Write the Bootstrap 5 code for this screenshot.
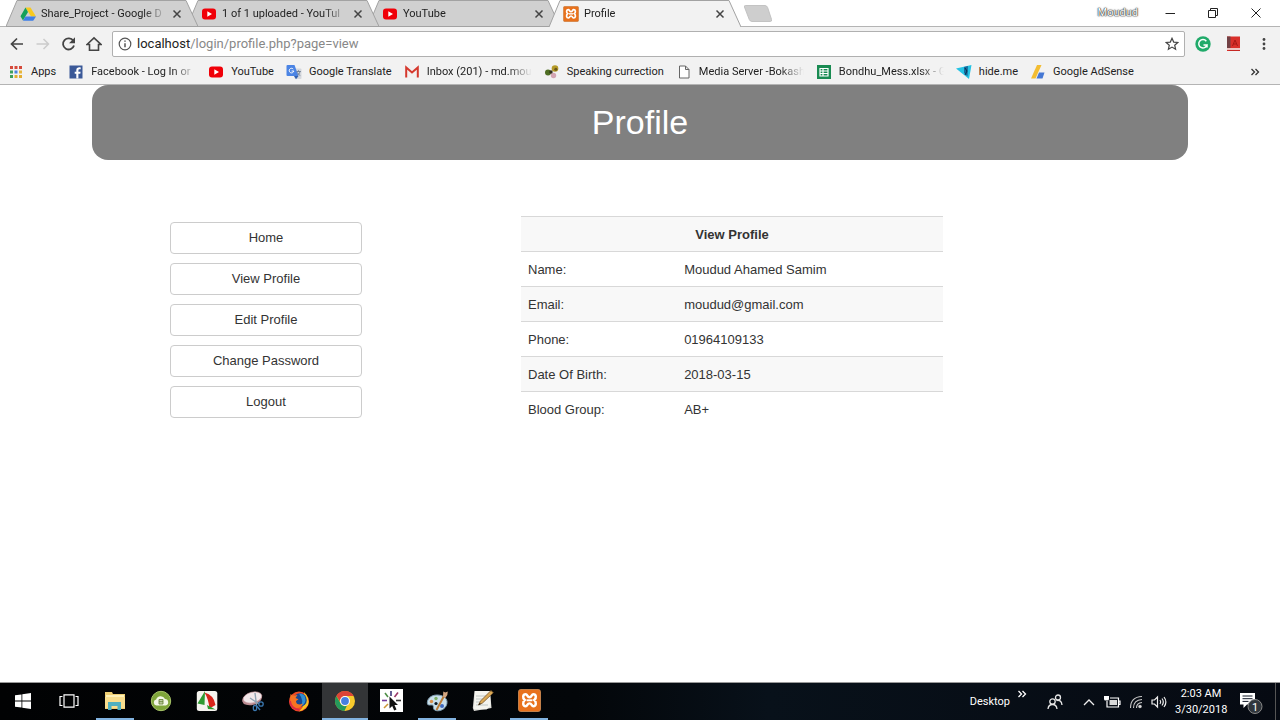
<!DOCTYPE html>
<html lang="en">
<head>
<meta charset="utf-8">
<meta name="viewport" content="width=device-width, initial-scale=1">
<title>Profile</title>
<link href="https://cdn.jsdelivr.net/npm/bootstrap@5.3.0/dist/css/bootstrap.min.css" rel="stylesheet">
<style>
body { font-family: Roboto, "Open Sans", sans-serif; font-size: 11px; line-height: 16px; color: #222; background: #fff; }
svg { display: block; flex: none; }
a { color: inherit; text-decoration: none; }
button { color: inherit; }
.plain { background: none; border: 0; padding: 0; }

/* Tab strip */
.strip { height: 27px; border-bottom: 1px solid #b4b4b4; }
.tabs { padding-left: 6px; height: 27px; min-width: 0; }
.tab-item { position: relative; flex: 0 1 192px; min-width: 0; height: 27px; margin-right: -11px; padding: 1px 14px 0 14px; gap: 5px; }
.tab-item:nth-child(1) { z-index: 3; }
.tab-item:nth-child(2) { z-index: 2; }
.tab-item:nth-child(3) { z-index: 1; }
.tab-item.current { z-index: 4; }
.tab-shape { position: absolute; inset: 0; width: 100%; height: 100%; z-index: -1; }
.fade-text { white-space: nowrap; -webkit-mask-image: linear-gradient(to right, #000 calc(100% - 24px), transparent); mask-image: linear-gradient(to right, #000 calc(100% - 24px), transparent); }
.tab-title { width: 126px; }
.new-tab { margin: 0 0 0 14px; }
.user-name { color: #fff; text-shadow: 0 0 1px #222, 0 0 1px #222, 0 0 2px #555; }
.win-btns { gap: 31px; padding: 0 18px 0 26px; }

/* Toolbar */
.browser-bars { background: #f2f2f2; border-bottom: 1px solid #b4b4b4; height: 58px; }
.toolbar { padding: 4px 9px 0 9px; gap: 10px; }
.address { height: 26px; background: #fff; border: 1px solid #b0b0b0; border-radius: 2px; padding: 0 5px; gap: 5px; position: relative; }
.address input { border: 0; outline: 0; padding: 0; background: none; font-size: 13px; line-height: 20px; color: transparent; caret-color: #222; width: 100%; height: 22px; }
.address .url { position: absolute; left: 24px; top: 2px; font-size: 13px; line-height: 20px; color: #888; pointer-events: none; }
.address .url b { font-weight: 400; color: #222; }
.bookmarks { height: 27px; padding: 2px 20px 0 8px; gap: 12px; }
.bookmarks a { gap: 7px; white-space: nowrap; }
.bookmarks .fade-text { width: 105px; }

/* Profile page */
.site { font-family: "Liberation Sans", Arial, sans-serif; font-size: 13px; line-height: 19px; color: #333; }
.site-width { max-width: 1096px; margin: 0 auto; }
.banner { background: #808080; border-radius: 16px; color: #fff; height: 75px; font-size: 34px; line-height: 75px; font-weight: 400; }
.profile-grid { display: grid; grid-template-columns: 192fr 422fr; column-gap: 159px; padding: 56px 245px 0 78px; }
.side-menu { gap: 9px; padding-top: 6px; }
.side-menu .btn { font-size: 13px; line-height: 20px; padding: 5px 8px; border: 1px solid #ccc; border-radius: 4px; color: #333; background: #fff; }
.profile-table { table-layout: fixed; --bs-table-color: #333; --bs-table-striped-color: #333; --bs-table-striped-bg: #f8f8f8; }
.profile-table th, .profile-table td { border-top: 1px solid #d8d8d8; border-bottom: 0; padding: 8px 7px 7px; }
.profile-table col:first-child { width: 37%; }

/* Taskbar */
.taskbar { height: 38px; border-top: 1px solid #999; background: linear-gradient(to right, #010203, #030609 45%, #08111a 60%, #060a12); color: #fff; }
.task { width: 46px; height: 37px; display: flex; align-items: center; justify-content: center; padding-bottom: 2px; }
.task.open { background: linear-gradient(#82b3e0, #82b3e0) center bottom / 38px 2px no-repeat; }
.task.focused { background: linear-gradient(#82b3e0, #82b3e0) center bottom / 46px 2px no-repeat #333537; }
.tray { padding-right: 4px; gap: 20px; }
.toolbar-label { gap: 7px; }
.status-icons { gap: 8px; }
.clock-area { gap: 12px; margin-left: -14px; }
.clock { line-height: 16px; width: 52px; }
.show-desktop { width: 1px; height: 37px; background: #555; }
</style>
</head>
<body class="d-flex flex-column min-vh-100">

<svg width="0" height="0" class="position-absolute" aria-hidden="true">
  <symbol id="i-yt" viewBox="0 0 16 16"><rect x="1" y="2.500" width="14" height="11" rx="3" fill="#f00008"/><path d="M6.300 5.300v5.400L11 8z" fill="#fff"/></symbol>
  <symbol id="i-close" viewBox="0 0 10 10"><path d="M1.500 1.500l7 7M8.500 1.500l-7 7" stroke="#444" stroke-width="1.500"/></symbol>
  <symbol id="i-xampp" viewBox="0 0 24 24"><rect x=".5" y=".5" width="23" height="23" rx="2.500" fill="#e8711c" stroke="#c8854e"/><path d="M8 5.500c-3 0-3.500 4-1 6-2.500 2-2 6.500 1 6.500 2 0 1.500-3 4-3s2 3 4 3c3 0 3.500-4.500 1-6.500 2.500-2 2-6-1-6-2 0-1.500 3-4 3s-2-3-4-3z" fill="none" stroke="#fff" stroke-width="2.600"/><path d="M9 11.800h6" stroke="#fff" stroke-width="2"/></symbol>
</svg>

<header>
  <div class="strip d-flex align-items-start">
    <nav class="tabs d-flex flex-grow-1" aria-label="Tabs">
      <div class="tab-item d-flex align-items-center">
        <svg class="tab-shape" viewBox="0 0 192 27" preserveAspectRatio="none"><path d="M0 26.500L11 .5H180L192 26.500z" fill="#d0d0d0" stroke="#a2a2a2"/></svg>
        <svg width="16" height="16" viewBox="0 0 16 16"><path d="M5.500 1.500h5L16 10.500h-5z" fill="#f7c91f"/><path d="M5.500 1.500L8 6 3 14.500.5 10.300z" fill="#15a05b"/><path d="M5.500 10.500H16L13.200 14.800H3z" fill="#3f7fe8"/></svg>
        <a href="#" class="fade-text tab-title">Share_Project - Google D</a>
        <button class="plain" aria-label="Close tab"><svg width="10" height="10"><use href="#i-close"/></svg></button>
      </div>
      <div class="tab-item d-flex align-items-center">
        <svg class="tab-shape" viewBox="0 0 192 27" preserveAspectRatio="none"><path d="M0 26.500L11 .5H180L192 26.500z" fill="#d0d0d0" stroke="#a2a2a2"/></svg>
        <svg width="16" height="16"><use href="#i-yt"/></svg>
        <a href="#" class="fade-text tab-title">1 of 1 uploaded - YouTul</a>
        <button class="plain" aria-label="Close tab"><svg width="10" height="10"><use href="#i-close"/></svg></button>
      </div>
      <div class="tab-item d-flex align-items-center">
        <svg class="tab-shape" viewBox="0 0 192 27" preserveAspectRatio="none"><path d="M0 26.500L11 .5H180L192 26.500z" fill="#d0d0d0" stroke="#a2a2a2"/></svg>
        <svg width="16" height="16"><use href="#i-yt"/></svg>
        <a href="#" class="fade-text tab-title">YouTube</a>
        <button class="plain" aria-label="Close tab"><svg width="10" height="10"><use href="#i-close"/></svg></button>
      </div>
      <div class="tab-item current d-flex align-items-center">
        <svg class="tab-shape" viewBox="0 0 192 27" preserveAspectRatio="none"><path d="M0 27L11 .5H180L192 27z" fill="#f2f2f2"/><path d="M0 27L11 .5H180L192 27" fill="none" stroke="#a2a2a2"/></svg>
        <svg width="16" height="16"><use href="#i-xampp"/></svg>
        <a href="#" class="fade-text tab-title">Profile</a>
        <button class="plain" aria-label="Close tab"><svg width="10" height="10"><use href="#i-close"/></svg></button>
      </div>
      <button class="plain new-tab" aria-label="New tab"><svg width="28" height="17" viewBox="0 0 32 17" preserveAspectRatio="none"><path d="M1.500.5H24q2 0 3 2l4.500 12q.5 2-1.500 2H9q-2 0-3-2L.5 2Q0 .5 1.500.5z" fill="#cecece" stroke="#c0c0c0"/></svg></button>
    </nav>
    <span class="user-name align-self-center">Moudud</span>
    <div class="win-btns d-flex align-items-center h-100">
      <button class="plain" aria-label="Minimize"><svg width="12" height="12" viewBox="0 0 12 12"><path d="M1.500 6.500h9.500" stroke="#222"/></svg></button>
      <button class="plain" aria-label="Restore"><svg width="12" height="12" viewBox="0 0 12 12" fill="none" stroke="#222"><path d="M1.500 3.500h7v7h-7zM3.500 3.500v-2h7v7h-2"/></svg></button>
      <button class="plain" aria-label="Close"><svg width="12" height="12" viewBox="0 0 12 12"><path d="M1.500 1.500l9 9M10.500 1.500l-9 9" stroke="#222"/></svg></button>
    </div>
  </div>

  <div class="browser-bars">
    <div class="toolbar d-flex align-items-center">
      <button class="plain" aria-label="Back"><svg width="16" height="16" viewBox="0 0 16 16" fill="none" stroke="#444" stroke-width="1.700"><path d="M14 8H2.500M8 2.500L2.500 8 8 13.500"/></svg></button>
      <button class="plain" aria-label="Forward" disabled><svg width="16" height="16" viewBox="0 0 16 16" fill="none" stroke="#ccc" stroke-width="1.500"><path d="M1.500 8H13M8.500 3l5 5-5 5"/></svg></button>
      <button class="plain" aria-label="Reload"><svg width="15" height="16" viewBox="0 0 15 16"><path d="M12.300 4.800A5.600 5.600 0 1 0 13 9.500" fill="none" stroke="#444" stroke-width="1.800"/><path d="M14 1.200v6H8z" fill="#444"/></svg></button>
      <button class="plain" aria-label="Home"><svg width="16" height="16" viewBox="0 0 16 16" fill="none" stroke="#444" stroke-width="1.600"><path d="M1 8.500L8 1.800l7 6.700h-2.500v5.700h-9V8.500z"/></svg></button>
      <div class="address d-flex align-items-center flex-grow-1">
        <svg width="14" height="14" viewBox="0 0 14 14"><circle cx="7" cy="7" r="5.800" fill="none" stroke="#555" stroke-width="1.200"/><path d="M7 6.200v4M7 3.500v1.300" stroke="#555" stroke-width="1.500"/></svg>
        <input type="text" aria-label="Address">
        <span class="url"><b>localhost</b>/login/profile.php?page=view</span>
        <button class="plain" aria-label="Bookmark this page"><svg width="14" height="14" viewBox="0 0 14 14"><path d="M7 1.300l1.700 3.800 4.100.4-3.100 2.700.9 4L7 10.100l-3.600 2.100.9-4L1.200 5.500l4.100-.4z" fill="none" stroke="#444" stroke-width="1.200"/></svg></button>
      </div>
      <div class="d-flex align-items-center">
        <svg class="me-3" width="16" height="16" viewBox="0 0 16 16"><circle cx="8" cy="8" r="7.700" fill="#20aa6a"/><path d="M11.300 5.200A4.200 4.200 0 1 0 12 9H8.500M12 9v2.500" fill="none" stroke="#fff" stroke-width="1.500"/></svg>
        <svg class="me-3" width="14" height="16" viewBox="0 0 14 16"><path d="M0 .5h13v14.500H0z" fill="#d9302b"/><path d="M0 .5h3.500V12H0z" fill="#724044"/><path d="M0 12h13v2H0z" fill="#efc6c4"/><path d="M2 14h11v1H2z" fill="#c62823"/><path d="M5.500 10L8 4l2.500 6M6.500 8h3" fill="none" stroke="#a51916"/></svg>
        <button class="plain" aria-label="Menu"><svg width="14" height="14" viewBox="0 0 14 14" fill="#444"><circle cx="7" cy="2.500" r="1.400"/><circle cx="7" cy="7" r="1.400"/><circle cx="7" cy="11.500" r="1.400"/></svg></button>
      </div>
    </div>
    <nav class="bookmarks d-flex align-items-center" aria-label="Bookmarks">
      <a href="#" class="d-flex align-items-center"><svg width="16" height="16" viewBox="0 0 16 16"><g fill="#d5493a"><path d="M2 2h3v3H2zM6.500 2h3v3h-3zM11 2h3v3h-3z"/></g><path d="M2 6.500h3v3H2z" fill="#3f9f5b"/><path d="M6.500 6.500h3v3h-3z" fill="#4a83dc"/><path d="M11 6.500h3v3h-3z" fill="#e8b63a"/><path d="M2 11h3v3H2z" fill="#3f9f5b"/><path d="M6.500 11h3v3h-3zM11 11h3v3h-3z" fill="#e3ad32"/></svg><span>Apps</span></a>
      <a href="#" class="d-flex align-items-center"><svg width="16" height="16" viewBox="0 0 16 16"><path d="M1.500 1.500h13v13h-13z" fill="#3b5998"/><path d="M10.400 14.500V9.800h1.900l.3-2h-2.200V6.500c0-.8.300-1.200 1.200-1.200h1.100V3.400C10.100 3 8.300 3.800 8.300 6.200v1.600H6.700v2h1.600v4.700z" fill="#fff"/></svg><span class="fade-text">Facebook - Log In or</span></a>
      <a href="#" class="d-flex align-items-center"><svg width="16" height="16"><use href="#i-yt"/></svg><span>YouTube</span></a>
      <a href="#" class="d-flex align-items-center"><svg width="16" height="16" viewBox="0 0 16 16"><path d="M6 4.500h8.500q1 0 1 1V14q0 1-1 1H9z" fill="#d5d8dd"/><path d="M1.500 1h7l4 11H1.500q-1 0-1-1V2q0-1 1-1z" fill="#4b84e4"/><path d="M8 12h4.500L10 15.300z" fill="#3160b0"/><path d="M7.200 5a2.300 2.300 0 1 0 .6 2H5.600" fill="none" stroke="#fff"/><path d="M10.500 7.500h4.300M12.500 6.300v1.200M14 7.500c-.5 2-1.500 3-2.500 3.800M11.500 8.500c.7 1.500 1.500 2.300 2.800 3" fill="none" stroke="#6b7a90" stroke-width=".9"/></svg><span>Google Translate</span></a>
      <a href="#" class="d-flex align-items-center"><svg width="16" height="16" viewBox="0 0 16 16"><path d="M1.500 3h13v10.500h-13z" fill="#f3f0f0"/><path d="M2.200 13.500v-10L8 8.500l5.800-5v10" fill="none" stroke="#d5392e" stroke-width="2"/></svg><span class="fade-text">Inbox (201) - md.mou</span></a>
      <a href="#" class="d-flex align-items-center"><svg width="16" height="16" viewBox="0 0 16 16"><circle cx="11" cy="4.500" r="3.300" fill="#b49a27"/><circle cx="4" cy="8.500" r="3" fill="#4f6e23"/><circle cx="9.500" cy="11.500" r="2.700" fill="#d3a5b3"/><circle cx="7" cy="8" r="1.700" fill="#302d1b"/><circle cx="11.800" cy="5.200" r="1.500" fill="#69561a"/></svg><span>Speaking currection</span></a>
      <a href="#" class="d-flex align-items-center"><svg width="16" height="16" viewBox="0 0 16 16" fill="#fff" stroke="#666"><path d="M3.500 2h6l3.500 3.500V14H3.500zM9.500 2v3.500H13"/></svg><span class="fade-text">Media Server -Bokash</span></a>
      <a href="#" class="d-flex align-items-center"><svg width="16" height="16" viewBox="0 0 16 16"><path d="M1 1h14v14H1z" fill="#198b52"/><path d="M4 4.500h8v7.500H4zM4 7h8M4 9.500h8M7 4.500V12" fill="none" stroke="#fff" stroke-width="1.200"/></svg><span class="fade-text">Bondhu_Mess.xlsx - G</span></a>
      <a href="#" class="d-flex align-items-center"><svg width="16" height="16" viewBox="0 0 16 16"><path d="M0 4.500L15.500 1 13 15z" fill="#24c3e4"/><path d="M8 3l4-1-.5 10.500L8 9z" fill="#18699b"/><path d="M9 4l2 3-2 4" fill="none" stroke="#07304d"/></svg><span>hide.me</span></a>
      <a href="#" class="d-flex align-items-center"><svg width="16" height="16" viewBox="0 0 16 16"><path d="M7 1h4.500L5.500 14.500H1z" fill="#f3bd32"/><path d="M9 8.500h5.500l-2 6H6.500z" fill="#4678d4"/></svg><span>Google AdSense</span></a>
      <button class="plain ms-auto" aria-label="More bookmarks"><svg width="10" height="8" viewBox="0 0 10 8" fill="none" stroke="#333" stroke-width="1.300"><path d="M1.500 1l3 3-3 3M5.500 1l3 3-3 3"/></svg></button>
    </nav>
  </div>
</header>

<main class="site flex-grow-1">
  <div class="site-width">
    <h1 class="banner text-center m-0">Profile</h1>
    <div class="profile-grid">
      <nav class="side-menu d-flex flex-column" aria-label="Profile menu">
        <a href="#" class="btn">Home</a>
        <a href="#" class="btn">View Profile</a>
        <a href="#" class="btn">Edit Profile</a>
        <a href="#" class="btn">Change Password</a>
        <a href="#" class="btn">Logout</a>
      </nav>
      <table class="table table-striped profile-table mb-0">
        <colgroup><col><col></colgroup>
        <tbody>
          <tr><th colspan="2" class="text-center">View Profile</th></tr>
          <tr><td>Name:</td><td>Moudud Ahamed Samim</td></tr>
          <tr><td>Email:</td><td>moudud@gmail.com</td></tr>
          <tr><td>Phone:</td><td>01964109133</td></tr>
          <tr><td>Date Of Birth:</td><td>2018-03-15</td></tr>
          <tr><td>Blood Group:</td><td>AB+</td></tr>
        </tbody>
      </table>
    </div>
  </div>
</main>

<footer class="taskbar d-flex align-items-center">
  <button class="plain task" aria-label="Start"><svg width="16" height="16" viewBox="0 0 16 16" fill="#fff"><path d="M0 2.300L6.500 1.400v6.200H0zM7.300 1.300L16 0v7.600H7.300zM0 8.400h6.500v6.200L0 13.700zM7.300 8.400H16V16l-8.700-1.300z"/></svg></button>
  <button class="plain task" aria-label="Task view"><svg width="20" height="14" viewBox="0 0 20 14" fill="none" stroke="#fff" stroke-width="1.200"><path d="M5 .8h10v12.400H5zM3.500 2.500H1v9h2.500M16.500 2.500H19v9h-2.500"/></svg></button>
  <button class="plain task open" aria-label="File Explorer"><svg width="22" height="20" viewBox="0 0 22 20"><path d="M1 1h7l1 2h12v15H1z" fill="#f0cf73"/><path d="M2 4h18v3H2z" fill="#fff1b8"/><path d="M1 6h20v11H1z" fill="#f9dd8c"/><path d="M4 19v-8h13v8h-3.500v-4h-6v4z" fill="#4fb0bf"/></svg></button>
  <button class="plain task" aria-label="Cloud backup"><svg width="22" height="22" viewBox="0 0 22 22"><circle cx="11" cy="11" r="9.700" fill="#7fa53a" stroke="#a8c568"/><path d="M6.500 15.500a3 3 0 0 1-.4-5.900A4.800 4.800 0 0 1 15 9a3.300 3.300 0 0 1 .7 6.500z" fill="#f3f7e6"/><path d="M9 9.500h4v4.500H9zM9 11.700h4" fill="#c5d1aa" stroke="#5e7b2b" stroke-width=".8"/></svg></button>
  <button class="plain task" aria-label="Disk utility"><svg width="22" height="22" viewBox="0 0 22 22"><rect x=".8" y="1" width="20.500" height="20" rx="2.500" fill="#f5f4ef"/><path d="M9 1L1.500 13.500l7 1.500z" fill="#2f9a31"/><path d="M8.500 2.500q9.500 2.500 11 12.500l-6 3.500Q12.500 9 8.500 2.500z" fill="#d8261b"/><path d="M11 15l8.500 4.500-7.500-.5z" fill="#2c982b"/></svg></button>
  <button class="plain task" aria-label="Snipping Tool"><svg width="24" height="22" viewBox="0 0 24 22"><ellipse cx="11" cy="9" rx="10" ry="6" transform="rotate(-14 11 9)" fill="#b98a90"/><ellipse cx="11.500" cy="7.500" rx="9.500" ry="5.300" transform="rotate(-14 11.500 7.500)" fill="#f1e8ea" stroke="#c6979d" stroke-width=".6"/><path d="M9 8l9 6M14 3l1.500 12" stroke="#8fa3b3" stroke-width="1.400"/><circle cx="20" cy="14" r="2.200" fill="none" stroke="#3b78b0" stroke-width="1.300"/><ellipse cx="14" cy="18" rx="1.700" ry="2.600" fill="none" stroke="#3b78b0" stroke-width="1.300"/><path d="M15 15l4 5" stroke="#3b78b0" stroke-width="1.500"/></svg></button>
  <button class="plain task" aria-label="Firefox"><svg width="22" height="22" viewBox="0 0 22 22"><circle cx="11" cy="11.500" r="10" fill="#f14b22"/><path d="M16 2q6 6 4 13-3 5-9 6.400Q19 15 16 2z" fill="#f9c522"/><circle cx="12" cy="10" r="6.800" fill="#174893"/><path d="M11 3.500q7 0 6.500 7-1 5-5.500 5.500 5-4-1-12.500z" fill="#308fd3"/><path d="M2.500 4q1.500 2 4 1.500l3-.5-2 3 3 1.200-2.500 1.800q0 3.500 4 3.500l3-1q-2 5-7 4.500Q.5 16 2.500 4z" fill="#f67322"/><path d="M2 11q1 8 9.500 9" fill="none" stroke="#dc2948" stroke-width="1.800"/></svg></button>
  <button class="plain task focused" aria-label="Chrome"><svg width="22" height="22" viewBox="0 0 22 22"><circle cx="11" cy="11" r="10" fill="#f7ca2c"/><path d="M11 1a10 10 0 0 1 8.700 5H11a5 5 0 0 0-4.700 6L2.300 6A10 10 0 0 1 11 1z" fill="#dc4437"/><path d="M2.300 6l4.400 7.500A5 5 0 0 0 13 15.600L10.400 21A10 10 0 0 1 2.300 6z" fill="#25995b"/><circle cx="11" cy="11" r="5" fill="#fff"/><circle cx="11" cy="11" r="3.900" fill="#477fdf"/></svg></button>
  <button class="plain task" aria-label="Pointer utility"><svg width="23" height="23" viewBox="0 0 23 23"><path d="M0 0h23v23H0z" fill="#fff"/><g stroke-width="1.600"><path d="M11 2v5" stroke="#3b357a"/><path d="M5 4l3 4" stroke="#4d8e45"/><path d="M18 3.500L14.500 8" stroke="#9a3767"/><path d="M2 11.500h5" stroke="#753a9c"/><path d="M16 11.500h5" stroke="#333"/><path d="M4 19l4-4" stroke="#cb9637"/></g><path d="M9.500 7.500v12l2.700-2.500 2 4.500 2.300-1-2-4.500h3.500z" fill="#111"/></svg></button>
  <button class="plain task open" aria-label="Paint"><svg width="23" height="22" viewBox="0 0 23 22"><path d="M11 5C4 5 .5 10 1.500 14c.8 2 3 .5 5 1 2 1-.5 4 3 5.500 6 1.500 12-3 11.500-9C20.500 8 17 5 11 5z" fill="#c9dfeb" stroke="#7f9eb1"/><circle cx="5.500" cy="11.500" r="1.700" fill="#d98f4a"/><circle cx="10" cy="8.500" r="1.700" fill="#7fb069"/><circle cx="10" cy="13.500" r="1.600" fill="#0d1a24"/><circle cx="16" cy="16" r="2" fill="#3f69bf"/><path d="M10.500 20L18 6" stroke="#bb7c38" stroke-width="2"/><path d="M17 6.500l.3-5 2 1 2.500-1-.5 3.500-2 3z" fill="#d4a680"/></svg></button>
  <button class="plain task" aria-label="Notes"><svg width="22" height="23" viewBox="0 0 22 23"><path d="M2.500 2H18l1.500 17L2 22 .8 19z" fill="#deded9"/><path d="M3 2h15l.5 15-4 3.500L2 20z" fill="#f5f5ef"/><path d="M4 7h10M4 10h8M4 13h6M4 16h12" stroke="#a9b5b5" stroke-width=".7"/><path d="M6.500 16l2-4L19 1.500l2.300 2.300L10.500 14z" fill="#dcaa56" stroke="#77562c" stroke-width=".8"/><path d="M6.500 16l1-2 1.500 1z" fill="#111"/></svg></button>
  <button class="plain task open" aria-label="XAMPP"><svg width="23" height="23"><use href="#i-xampp"/></svg></button>

  <div class="tray d-flex align-items-center ms-auto">
    <div class="toolbar-label d-flex align-items-center">
      <span>Desktop</span>
      <button class="plain mb-3" aria-label="Show more toolbars"><svg width="10" height="8" viewBox="0 0 10 8" fill="none" stroke="#fff" stroke-width="1.300"><path d="M1.500 1l3 3-3 3M5.500 1l3 3-3 3"/></svg></button>
    </div>
    <svg width="16" height="16" viewBox="0 0 16 16" fill="none" stroke="#e7e7e7" stroke-width="1.300"><circle cx="5.500" cy="7.500" r="2.700"/><path d="M1 15q.5-4.500 4.500-4.500T10 15"/><circle cx="11" cy="3.500" r="2.500"/><path d="M9.500 6.500Q14.500 5.500 15 11"/></svg>
    <div class="status-icons d-flex align-items-center">
      <svg width="12" height="8" viewBox="0 0 12 8" fill="none" stroke="#eee" stroke-width="1.300"><path d="M1 7l5-5 5 5"/></svg>
      <svg width="18" height="14" viewBox="0 0 18 14"><path d="M6.500 5h7.500v5H6.500z" fill="#d9d9d9"/><path d="M4 6v6h11.500V3H7M15.500 6H17v3.500h-1.500" fill="none" stroke="#fff" stroke-width="1.200"/><path d="M1 1h5v3q0 1.500-1.500 1.500h-2Q1 5.500 1 4z" fill="#fff"/></svg>
      <svg width="14" height="14" viewBox="0 0 14 14" fill="none" stroke="#c8c8c8" stroke-width="1.100"><path d="M1.500 13Q1.500 2 13 1.500M4.500 13Q4.500 5 13 4.500M7.500 13Q7.500 8 13 7.500"/><circle cx="11" cy="11.500" r="1.200" fill="#eee"/></svg>
      <svg width="18" height="14" viewBox="0 0 18 14" fill="none" stroke="#eee" stroke-width="1.200"><path d="M1 5h2.500l3-3v10l-3-3H1zM9 5q1.500 2 0 4M11 3.500q2.600 3.500 0 7M13 2q3.800 5 0 10"/></svg>
    </div>
    <div class="clock-area d-flex align-items-center">
      <div class="clock text-center">2:03 AM<br>3/30/2018</div>
      <button class="plain" aria-label="Notifications, 1 new"><svg width="24" height="24" viewBox="0 0 24 24"><path d="M1 3h15v11.500H8L4.500 18v-3.500H1z" fill="#fff"/><path d="M3.500 6h10M3.500 8.700h10M3.500 11.400h6" stroke="#111827"/><circle cx="16" cy="16.500" r="7" fill="#30363c" stroke="#888"/><text x="16" y="20.500" fill="#fff" font-size="11" text-anchor="middle">1</text></svg></button>
      <div class="show-desktop"></div>
    </div>
  </div>
</footer>
<script src="https://cdn.jsdelivr.net/npm/bootstrap@5.3.0/dist/js/bootstrap.bundle.min.js"></script>
</body>
</html>
